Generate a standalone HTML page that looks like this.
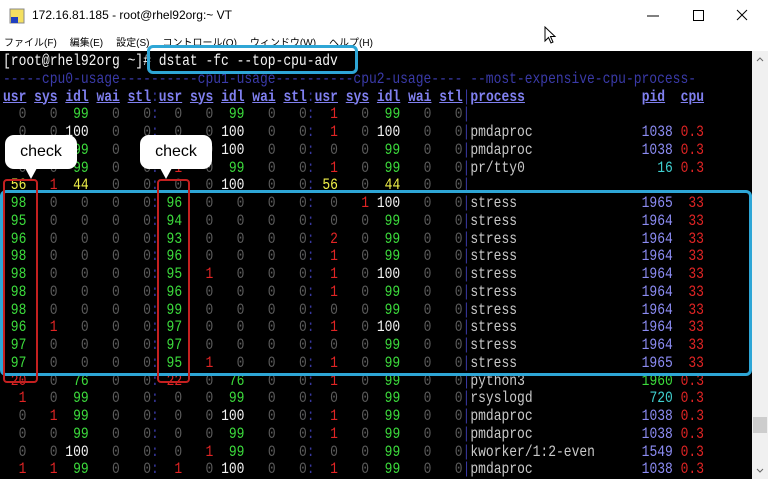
<!DOCTYPE html>
<html><head><meta charset="utf-8"><style>
html,body{margin:0;padding:0;width:768px;height:479px;overflow:hidden;background:#fff;font-family:"Liberation Sans","Noto Sans CJK JP",sans-serif;}
#title{position:absolute;left:32px;top:8px;font-size:12px;color:#000;}
#menu{position:absolute;left:4px;top:34px;font-size:10px;color:#000;word-spacing:0;}
#menu span{margin-right:13px;}
#term{position:absolute;left:0;top:51px;width:752px;height:428px;background:#000;}
#sb{position:absolute;left:752px;top:51px;width:16px;height:428px;background:#f0f0f0;}
pre{position:absolute;left:3px;top:53px;margin:0;font-family:"Liberation Mono",monospace;font-size:16px;line-height:17.75px;color:#c8c8c8;transform:scaleX(0.811);transform-origin:0 0;white-space:pre;}
i{font-style:normal}
.z{color:#5c5c5c}.g{color:#3cdc3c}.w{color:#f4f4f4}.r{color:#e02424}.y{color:#f0f048}.b{color:#3838a0}.p{color:#c8c8c8}.i{color:#8c8cf4}.c{color:#40d0d0}.h{color:#8080f0;font-weight:bold;text-decoration:underline}.d{color:#3a3aa8}
.box{position:absolute;border:3px solid #2ea6d6;border-radius:6px;}
.rb{position:absolute;border:2px solid #c42020;border-radius:4px;}
.bub{position:absolute;background:#fff;border-radius:9px;font-size:16px;color:#000;text-align:center;line-height:34px;width:72px;height:34px;}
.bub:after{content:"";position:absolute;left:20px;bottom:-10px;border-left:6px solid transparent;border-right:6px solid transparent;border-top:11px solid #fff;}
</style></head><body>
<svg style="position:absolute;left:9px;top:8px" width="16" height="16"><rect x="1" y="1" width="14" height="14" fill="#f4e060" stroke="#888"/><rect x="2" y="9" width="7" height="6" fill="#2040c0"/></svg>
<div id="title">172.16.81.185 - root@rhel92org:~ VT</div>
<div id="menu"><span>ファイル(F)</span><span>編集(E)</span><span>設定(S)</span><span>コントロール(O)</span><span>ウィンドウ(W)</span><span>ヘルプ(H)</span></div>
<svg style="position:absolute;left:640px;top:6px" width="120" height="20"><line x1="7" y1="10" x2="19" y2="10" stroke="#000"/><rect x="53.5" y="4.5" width="10" height="10" fill="none" stroke="#000"/><path d="M97 4 L107 14 M107 4 L97 14" stroke="#000"/></svg>
<svg style="position:absolute;left:544px;top:26px" width="14" height="20"><path d="M1 1 L1 15 L4.5 11.5 L7 17 L9 16 L6.5 10.5 L11 10.5 Z" fill="#fff" stroke="#000"/></svg>
<div id="term"></div>
<div id="sb"><svg width="16" height="428"><path d="M5 10 L8 7 L11 10" stroke="#666" fill="none"/><rect x="1" y="366" width="14" height="16" fill="#cdcdcd"/><path d="M5 418 L8 421 L11 418" stroke="#666" fill="none"/></svg></div>
<pre><i class=w>[root@rhel92org ~]# dstat -fc --top-cpu-adv</i>
<i class=d>-----cpu0-usage----------cpu1-usage----------cpu2-usage---- --most-expensive-cpu-process-</i>
<i class=h>usr</i> <i class=h>sys</i> <i class=h>idl</i> <i class=h>wai</i> <i class=h>stl</i><i class=b>:</i><i class=h>usr</i> <i class=h>sys</i> <i class=h>idl</i> <i class=h>wai</i> <i class=h>stl</i><i class=b>:</i><i class=h>usr</i> <i class=h>sys</i> <i class=h>idl</i> <i class=h>wai</i> <i class=h>stl</i><i class=b>|</i><i class=h>process</i>               <i class=h>pid</i>  <i class=h>cpu</i>
<i class=z>  0   0</i> <i class=g> 99</i> <i class=z>  0   0</i><i class=b>:</i><i class=z>  0   0</i> <i class=g> 99</i> <i class=z>  0   0</i><i class=b>:</i><i class=r>  1</i> <i class=z>  0</i> <i class=g> 99</i> <i class=z>  0   0</i><i class=b>|</i>
<i class=z>  0   0</i> <i class=w>100</i> <i class=z>  0   0</i><i class=b>:</i><i class=z>  0   0</i> <i class=w>100</i> <i class=z>  0   0</i><i class=b>:</i><i class=r>  1</i> <i class=z>  0</i> <i class=w>100</i> <i class=z>  0   0</i><i class=b>|</i>pmdaproc             <i class=i> 1038</i> <i class=r>0.3</i>
<i class=z>  0   0</i> <i class=g> 99</i> <i class=z>  0   0</i><i class=b>:</i><i class=z>  0   0</i> <i class=w>100</i> <i class=z>  0   0</i><i class=b>:</i><i class=z>  0   0</i> <i class=g> 99</i> <i class=z>  0   0</i><i class=b>|</i>pmdaproc             <i class=i> 1038</i> <i class=r>0.3</i>
<i class=z>  0   0</i> <i class=g> 99</i> <i class=z>  0   0</i><i class=b>:</i><i class=r>  1</i> <i class=z>  0</i> <i class=g> 99</i> <i class=z>  0   0</i><i class=b>:</i><i class=r>  1</i> <i class=z>  0</i> <i class=g> 99</i> <i class=z>  0   0</i><i class=b>|</i>pr/tty0              <i class=c>   16</i> <i class=r>0.3</i>
<i class=y> 56</i> <i class=r>  1</i> <i class=y> 44</i> <i class=z>  0   0</i><i class=b>:</i><i class=z>  0   0</i> <i class=w>100</i> <i class=z>  0   0</i><i class=b>:</i><i class=y> 56</i> <i class=z>  0</i> <i class=y> 44</i> <i class=z>  0   0</i><i class=b>|</i>
<i class=g> 98</i> <i class=z>  0   0   0   0</i><i class=b>:</i><i class=g> 96</i> <i class=z>  0   0   0   0</i><i class=b>:</i><i class=z>  0</i> <i class=r>  1</i> <i class=w>100</i> <i class=z>  0   0</i><i class=b>|</i>stress               <i class=i> 1965</i> <i class=r> 33</i>
<i class=g> 95</i> <i class=z>  0   0   0   0</i><i class=b>:</i><i class=g> 94</i> <i class=z>  0   0   0   0</i><i class=b>:</i><i class=z>  0   0</i> <i class=g> 99</i> <i class=z>  0   0</i><i class=b>|</i>stress               <i class=i> 1964</i> <i class=r> 33</i>
<i class=g> 96</i> <i class=z>  0   0   0   0</i><i class=b>:</i><i class=g> 93</i> <i class=z>  0   0   0   0</i><i class=b>:</i><i class=r>  2</i> <i class=z>  0</i> <i class=g> 99</i> <i class=z>  0   0</i><i class=b>|</i>stress               <i class=i> 1964</i> <i class=r> 33</i>
<i class=g> 98</i> <i class=z>  0   0   0   0</i><i class=b>:</i><i class=g> 96</i> <i class=z>  0   0   0   0</i><i class=b>:</i><i class=r>  1</i> <i class=z>  0</i> <i class=g> 99</i> <i class=z>  0   0</i><i class=b>|</i>stress               <i class=i> 1964</i> <i class=r> 33</i>
<i class=g> 98</i> <i class=z>  0   0   0   0</i><i class=b>:</i><i class=g> 95</i> <i class=r>  1</i> <i class=z>  0   0   0</i><i class=b>:</i><i class=r>  1</i> <i class=z>  0</i> <i class=w>100</i> <i class=z>  0   0</i><i class=b>|</i>stress               <i class=i> 1964</i> <i class=r> 33</i>
<i class=g> 98</i> <i class=z>  0   0   0   0</i><i class=b>:</i><i class=g> 96</i> <i class=z>  0   0   0   0</i><i class=b>:</i><i class=r>  1</i> <i class=z>  0</i> <i class=g> 99</i> <i class=z>  0   0</i><i class=b>|</i>stress               <i class=i> 1964</i> <i class=r> 33</i>
<i class=g> 98</i> <i class=z>  0   0   0   0</i><i class=b>:</i><i class=g> 99</i> <i class=z>  0   0   0   0</i><i class=b>:</i><i class=z>  0   0</i> <i class=g> 99</i> <i class=z>  0   0</i><i class=b>|</i>stress               <i class=i> 1964</i> <i class=r> 33</i>
<i class=g> 96</i> <i class=r>  1</i> <i class=z>  0   0   0</i><i class=b>:</i><i class=g> 97</i> <i class=z>  0   0   0   0</i><i class=b>:</i><i class=r>  1</i> <i class=z>  0</i> <i class=w>100</i> <i class=z>  0   0</i><i class=b>|</i>stress               <i class=i> 1964</i> <i class=r> 33</i>
<i class=g> 97</i> <i class=z>  0   0   0   0</i><i class=b>:</i><i class=g> 97</i> <i class=z>  0   0   0   0</i><i class=b>:</i><i class=z>  0   0</i> <i class=g> 99</i> <i class=z>  0   0</i><i class=b>|</i>stress               <i class=i> 1964</i> <i class=r> 33</i>
<i class=g> 97</i> <i class=z>  0   0   0   0</i><i class=b>:</i><i class=g> 95</i> <i class=r>  1</i> <i class=z>  0   0   0</i><i class=b>:</i><i class=r>  1</i> <i class=z>  0</i> <i class=g> 99</i> <i class=z>  0   0</i><i class=b>|</i>stress               <i class=i> 1965</i> <i class=r> 33</i>
<i class=r> 20</i> <i class=z>  0</i> <i class=g> 76</i> <i class=z>  0   0</i><i class=b>:</i><i class=r> 22</i> <i class=z>  0</i> <i class=g> 76</i> <i class=z>  0   0</i><i class=b>:</i><i class=r>  1</i> <i class=z>  0</i> <i class=g> 99</i> <i class=z>  0   0</i><i class=b>|</i>python3              <i class=g> 1960</i> <i class=r>0.3</i>
<i class=r>  1</i> <i class=z>  0</i> <i class=g> 99</i> <i class=z>  0   0</i><i class=b>:</i><i class=z>  0   0</i> <i class=g> 99</i> <i class=z>  0   0</i><i class=b>:</i><i class=z>  0   0</i> <i class=g> 99</i> <i class=z>  0   0</i><i class=b>|</i>rsyslogd             <i class=c>  720</i> <i class=r>0.3</i>
<i class=z>  0</i> <i class=r>  1</i> <i class=g> 99</i> <i class=z>  0   0</i><i class=b>:</i><i class=z>  0   0</i> <i class=w>100</i> <i class=z>  0   0</i><i class=b>:</i><i class=r>  1</i> <i class=z>  0</i> <i class=g> 99</i> <i class=z>  0   0</i><i class=b>|</i>pmdaproc             <i class=i> 1038</i> <i class=r>0.3</i>
<i class=z>  0   0</i> <i class=g> 99</i> <i class=z>  0   0</i><i class=b>:</i><i class=z>  0   0</i> <i class=g> 99</i> <i class=z>  0   0</i><i class=b>:</i><i class=r>  1</i> <i class=z>  0</i> <i class=g> 99</i> <i class=z>  0   0</i><i class=b>|</i>pmdaproc             <i class=i> 1038</i> <i class=r>0.3</i>
<i class=z>  0   0</i> <i class=w>100</i> <i class=z>  0   0</i><i class=b>:</i><i class=z>  0</i> <i class=r>  1</i> <i class=g> 99</i> <i class=z>  0   0</i><i class=b>:</i><i class=z>  0   0</i> <i class=g> 99</i> <i class=z>  0   0</i><i class=b>|</i>kworker/1:2-even     <i class=i> 1549</i> <i class=r>0.3</i>
<i class=r>  1</i> <i class=r>  1</i> <i class=g> 99</i> <i class=z>  0   0</i><i class=b>:</i><i class=r>  1</i> <i class=z>  0</i> <i class=w>100</i> <i class=z>  0   0</i><i class=b>:</i><i class=r>  1</i> <i class=z>  0</i> <i class=g> 99</i> <i class=z>  0   0</i><i class=b>|</i>pmdaproc             <i class=i> 1038</i> <i class=r>0.3</i></pre>
<div class="box" style="left:147px;top:45px;width:205px;height:23px;"></div>
<div class="box" style="left:0px;top:190px;width:746px;height:180px;"></div>
<div class="rb" style="left:3px;top:179px;width:31px;height:200px;"></div>
<div class="rb" style="left:157px;top:179px;width:29px;height:200px;"></div>
<div class="bub" style="left:5px;top:135px;">check</div>
<div class="bub" style="left:140px;top:135px;">check</div>
</body></html>
